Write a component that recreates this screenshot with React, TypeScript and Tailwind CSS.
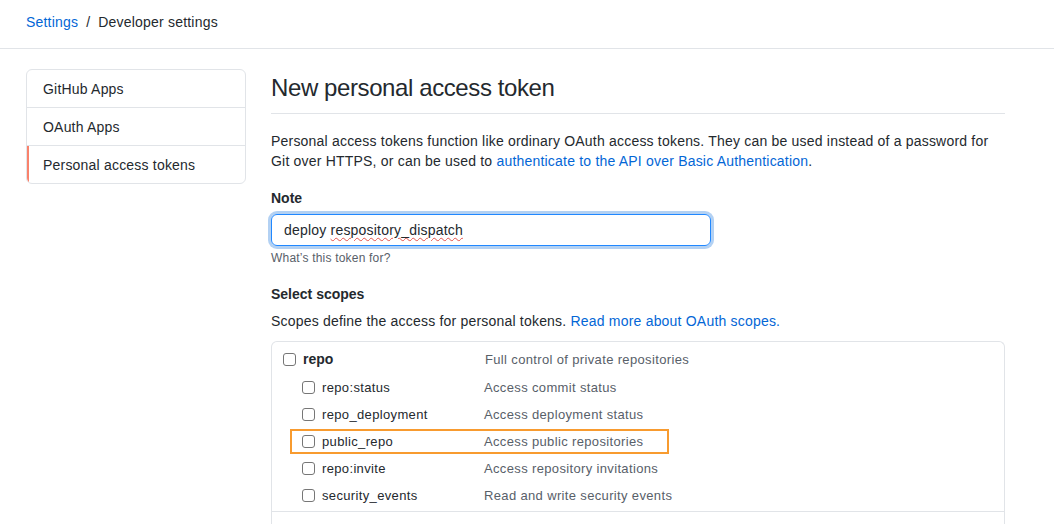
import React from 'react';

const scopes = [
  { name: 'repo:status', desc: 'Access commit status' },
  { name: 'repo_deployment', desc: 'Access deployment status' },
  { name: 'public_repo', desc: 'Access public repositories', highlight: true },
  { name: 'repo:invite', desc: 'Access repository invitations' },
  { name: 'security_events', desc: 'Read and write security events' },
];

function Box() {
  return (
    <span className="inline-block w-[13px] h-[13px] rounded-[3px] border border-[#767676] bg-white shrink-0" />
  );
}

export default function App() {
  return (
    <div className="min-h-[524px] bg-white text-[#24292e] text-[14px] tracking-[0.2px] font-['Liberation_Sans',Arial,sans-serif]">
      {/* breadcrumb */}
      <div className="h-[49px] border-b border-[#e1e4e8] px-[26px] flex items-center pb-[4px]">
        <a className="text-[#0366d6]">Settings</a>
        <span className="mx-[8px] text-[#24292e]">/</span>
        <span>Developer settings</span>
      </div>

      <div className="flex pl-[26px] pt-[20px] gap-[25px]">
        {/* sidebar */}
        <nav className="w-[220px] shrink-0 self-start border border-[#e1e4e8] rounded-[6px] overflow-hidden">
          <div className="h-[38px] flex items-center pl-[16px] pt-[1px] border-b border-[#e1e4e8]">GitHub Apps</div>
          <div className="h-[38px] flex items-center pl-[16px] pt-[1px] border-b border-[#e1e4e8]">OAuth Apps</div>
          <div className="h-[37px] flex items-center pl-[14px] pt-[1px] border-l-2 border-[#f9826c]">Personal access tokens</div>
        </nav>

        {/* main */}
        <main className="w-[734px]">
          <h2 className="text-[24px] tracking-[-0.4px] leading-[38px] pb-[6px] border-b border-[#e1e4e8]">
            New personal access token
          </h2>
          <p className="mt-[17px] leading-[20px]">
            Personal access tokens function like ordinary OAuth access tokens. They can be used instead of a password for
            <br />
            Git over HTTPS, or can be used to{' '}
            <a className="text-[#0366d6]">authenticate to the API over Basic Authentication</a>.
          </p>

          <div className="mt-[17px] font-bold leading-[20px] tracking-normal">Note</div>
          <div className="mt-[6px] w-[440px] h-[32px] rounded-[6px] border border-[#2188ff] shadow-[0_0_0_3px_rgba(3,102,214,0.3)] flex items-center px-[12px]">
            <span>
              deploy{' '}
              <span className="underline decoration-wavy decoration-[#e5534b] decoration-1 underline-offset-2">
                respository_dispatch
              </span>
            </span>
          </div>
          <div className="mt-[3px] text-[12px] leading-[18px] text-[#586069]">What&rsquo;s this token for?</div>

          <div className="mt-[17px] font-bold leading-[20px] tracking-normal">Select scopes</div>
          <p className="mt-[7px] leading-[20px]">
            Scopes define the access for personal tokens.{' '}
            <a className="text-[#0366d6]">Read more about OAuth scopes.</a>
          </p>

          <div className="mt-[10px] border border-[#e1e4e8] rounded-t-[6px] border-b-0 text-[13px] tracking-[0.35px] whitespace-nowrap">
            <div className="pt-[5px] pb-[2px]">
              <div className="flex items-center h-[25px] mb-[2px] pl-[11px]">
                <Box />
                <span className="ml-[7px] w-[182px] shrink-0 font-bold text-[14px] tracking-normal">repo</span>
                <span className="text-[#586069]">Full control of private repositories</span>
              </div>
              {scopes.map(s => (
                <div key={s.name} className="pl-[20px] py-[1px]">
                  <div
                    className={`flex items-center h-[25px] w-[379px] -ml-[2px] pl-[10px] border-2 ${s.highlight ? 'border-[#f89b2f]' : 'border-transparent'}`}
                  >
                    <Box />
                    <span className="ml-[7px] w-[162px] shrink-0">{s.name}</span>
                    <span className="text-[#586069] shrink-0">{s.desc}</span>
                  </div>
                </div>
              ))}
            </div>
            <div className="border-t border-[#e1e4e8] h-[20px]" />
          </div>
        </main>
      </div>
    </div>
  );
}
